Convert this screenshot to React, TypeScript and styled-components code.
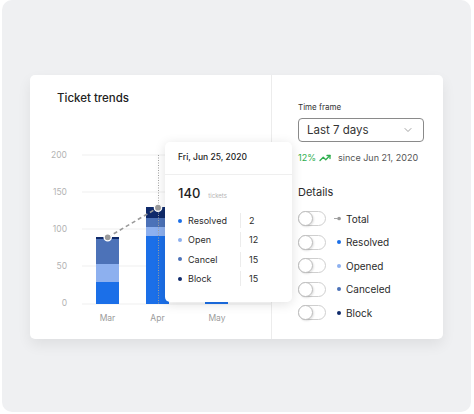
import React from "react";
import styled, { createGlobalStyle } from "styled-components";
import { ChevronDown, TrendingUp } from "lucide-react";

const GlobalStyle = createGlobalStyle`
  html, body {
    margin: 0;
    padding: 0;
    background: #ffffff;
    font-family: Inter, "Noto Sans", sans-serif;
    color: #2b2b2b;
  }
`;

const COLORS = {
  resolved: "#1b6fe8",
  opened: "#8db0ef",
  canceled: "#4c72b8",
  block: "#0f2a6b",
  total: "#9a9a9a",
};

const Page = styled.div`
  margin: 0 3px 0 2px;
  height: 412px;
  background: #eff0f2;
  border-radius: 10px;
  padding: 75px 0 0 28px;
  box-sizing: border-box;
`;

const Card = styled.div`
  position: relative;
  width: 413px;
  height: 264px;
  background: #ffffff;
  border-radius: 5px;
  box-shadow: 0 6px 14px rgba(0, 0, 0, 0.07);
  display: grid;
  grid-template-columns: 242px 1fr;
`;

const LeftPane = styled.section`
  display: flex;
  flex-direction: column;
  border-right: 1px solid #ececec;
`;

const Title = styled.h2`
  margin: 0;
  padding: 15px 27px 0;
  font-size: 11.5px;
  line-height: 16px;
  font-weight: 500;
  color: #222;
`;

const Chart = styled.svg`
  display: block;
  margin-top: 34px;
`;

const Tooltip = styled.div`
  position: absolute;
  left: 135px;
  top: 67px;
  width: 127px;
  height: 160px;
  background: #ffffff;
  border-radius: 5px;
  box-shadow: 0 2px 12px rgba(0, 0, 0, 0.12);
  z-index: 2;
`;

const TipHeader = styled.div`
  height: 33px;
  box-sizing: border-box;
  padding: 9px 13px 0;
  font-size: 8.5px;
  line-height: 12px;
  font-weight: 500;
  color: #222;
  border-bottom: 1px solid #efefef;
`;

const TipTotal = styled.div`
  margin-top: 9px;
  padding: 0 13px;
  line-height: 18px;
  font-size: 13px;
  font-weight: 500;
  color: #1e1e1e;
  display: flex;
  align-items: baseline;
  gap: 8px;
`;

const TipUnit = styled.span`
  font-size: 6px;
  font-weight: 400;
  color: #b5b5b5;
`;

const TipRows = styled.div`
  margin-top: 6px;
  display: flex;
  flex-direction: column;
`;

const TipRow = styled.div`
  display: grid;
  grid-template-columns: 62px 1fr;
  height: 19.3px;
  align-items: center;
  padding-left: 13px;
  font-size: 9px;
  color: #2b2b2b;
`;

const TipLabel = styled.span`
  display: flex;
  align-items: center;
  gap: 6px;
`;

const TipValue = styled.span`
  border-left: 1px solid #ececec;
  padding-left: 8px;
  line-height: 15px;
`;

const Dot = styled.span<{ color: string }>`
  width: 4px;
  height: 4px;
  border-radius: 50%;
  background: ${(p) => p.color};
  flex: none;
`;

const RightPane = styled.section`
  padding: 27px 0 0 26px;
  display: flex;
  flex-direction: column;
`;

const FieldLabel = styled.div`
  font-size: 8px;
  line-height: 10px;
  color: #333;
`;

const Select = styled.div`
  margin-top: 6px;
  width: 126px;
  height: 24px;
  box-sizing: border-box;
  border: 1px solid #8a8a8a;
  border-radius: 4px;
  padding: 0 9px 0 8px;
  display: flex;
  align-items: center;
  justify-content: space-between;
  font-size: 11.5px;
  color: #333;
`;

const Trend = styled.div`
  margin-top: 10px;
  display: flex;
  align-items: center;
  line-height: 12px;
  font-size: 9px;
  color: #555;
`;

const TrendValue = styled.span`
  color: #2eae4e;
  display: flex;
  align-items: center;
  gap: 3px;
  margin-right: 7px;
`;

const SectionTitle = styled.div`
  margin-top: 21px;
  font-size: 11px;
  line-height: 14px;
  color: #2b2b2b;
`;

const Legend = styled.div`
  margin-top: 8px;
  display: flex;
  flex-direction: column;
`;

const LegendRow = styled.div`
  height: 23.5px;
  display: flex;
  align-items: center;
  font-size: 10px;
  color: #2b2b2b;
`;

const Switch = styled.span`
  position: relative;
  width: 28px;
  height: 15px;
  box-sizing: border-box;
  border: 1px solid #cfcfcf;
  border-radius: 8px;
  background: #fff;
  margin-right: 8px;

  &::after {
    content: "";
    position: absolute;
    left: -1px;
    top: -1px;
    width: 15px;
    height: 15px;
    box-sizing: border-box;
    border-radius: 50%;
    border: 1px solid #bdbdbd;
    background: #fff;
    box-shadow: 1px 1px 2px rgba(0, 0, 0, 0.12);
  }
`;

const Marker = styled.span`
  width: 7px;
  display: flex;
  justify-content: flex-end;
  margin-right: 5px;
`;

function TotalMarker() {
  return (
    <svg width="8" height="5" viewBox="0 0 8 5">
      <line x1="0" y1="2.5" x2="4" y2="2.5" stroke={COLORS.total} strokeWidth="1" />
      <circle cx="5.8" cy="2.5" r="2.1" fill={COLORS.total} />
    </svg>
  );
}

const gridY = [155, 192, 229, 266];
const yLabels = [
  { v: "200", y: 155 },
  { v: "150", y: 192 },
  { v: "100", y: 229 },
  { v: "50", y: 266 },
  { v: "0", y: 303 },
];

type Segment = { color: string; from: number; to: number };
const bars: { x: number; segs: Segment[] }[] = [
  {
    x: 96,
    segs: [
      { color: COLORS.block, from: 237, to: 239 },
      { color: COLORS.canceled, from: 239, to: 264 },
      { color: COLORS.opened, from: 264, to: 282 },
      { color: COLORS.resolved, from: 282, to: 304 },
    ],
  },
  {
    x: 146,
    segs: [
      { color: COLORS.block, from: 207, to: 218 },
      { color: COLORS.canceled, from: 218, to: 227 },
      { color: COLORS.opened, from: 227, to: 236 },
      { color: COLORS.resolved, from: 236, to: 304 },
    ],
  },
  {
    x: 205,
    segs: [{ color: COLORS.resolved, from: 302, to: 304 }],
  },
];

const months = [
  { m: "Mar", x: 107.5 },
  { m: "Apr", x: 157.5 },
  { m: "May", x: 217 },
];

function TrendChart() {
  return (
    <Chart width="242" height="198" viewBox="30 140 242 198">
      {gridY.map((y) => (
        <line key={y} x1="82" x2="272" y1={y} y2={y} stroke="#efefef" strokeWidth="1" />
      ))}
      <line x1="82" x2="272" y1="304" y2="304" stroke="#efefef" strokeWidth="1" />
      {yLabels.map((l) => (
        <text
          key={l.v}
          x="67"
          y={l.y + 3}
          textAnchor="end"
          fontSize="8.5"
          fill="#b3b3b3"
          fontFamily="Inter, sans-serif"
        >
          {l.v}
        </text>
      ))}
      {bars.map((b) =>
        b.segs.map((s) => (
          <rect
            key={`${b.x}-${s.from}`}
            x={b.x}
            y={s.from}
            width="23"
            height={s.to - s.from}
            fill={s.color}
          />
        ))
      )}
      <line
        x1="158.5"
        x2="158.5"
        y1="155"
        y2="304"
        stroke="#a0a0a0"
        strokeWidth="1"
        strokeDasharray="1 1.5"
      />
      <line
        x1="107.7"
        y1="237.3"
        x2="158"
        y2="207.7"
        stroke="#9a9a9a"
        strokeWidth="1.6"
        strokeDasharray="4 3"
      />
      <circle cx="107.7" cy="237.3" r="3.6" fill="#9a9a9a" stroke="#fff" strokeWidth="1.4" />
      <circle cx="158" cy="207.7" r="3.6" fill="#9a9a9a" stroke="#fff" strokeWidth="1.4" />
      {months.map((m) => (
        <text
          key={m.m}
          x={m.x}
          y="321"
          textAnchor="middle"
          fontSize="8.5"
          fill="#9b9b9b"
          fontFamily="Inter, sans-serif"
        >
          {m.m}
        </text>
      ))}
    </Chart>
  );
}

const tipRows = [
  { label: "Resolved", value: 2, color: COLORS.resolved },
  { label: "Open", value: 12, color: COLORS.opened },
  { label: "Cancel", value: 15, color: COLORS.canceled },
  { label: "Block", value: 15, color: COLORS.block },
];

const legend = [
  { label: "Total", color: COLORS.total },
  { label: "Resolved", color: COLORS.resolved },
  { label: "Opened", color: COLORS.opened },
  { label: "Canceled", color: COLORS.canceled },
  { label: "Block", color: COLORS.block },
];

export default function App() {
  return (
    <>
      <GlobalStyle />
      <Page>
        <Card>
          <LeftPane>
            <Title>Ticket trends</Title>
            <TrendChart />
          </LeftPane>

          <Tooltip>
            <TipHeader>Fri, Jun 25, 2020</TipHeader>
            <TipTotal>
              140 <TipUnit>tickets</TipUnit>
            </TipTotal>
            <TipRows>
              {tipRows.map((r) => (
                <TipRow key={r.label}>
                  <TipLabel>
                    <Dot color={r.color} />
                    {r.label}
                  </TipLabel>
                  <TipValue>{r.value}</TipValue>
                </TipRow>
              ))}
            </TipRows>
          </Tooltip>

          <RightPane>
            <FieldLabel>Time frame</FieldLabel>
            <Select>
              Last 7 days
              <ChevronDown size={12} color="#8a8a8a" strokeWidth={1.6} />
            </Select>
            <Trend>
              <TrendValue>
                12%
                <TrendingUp size={12} strokeWidth={2.6} color="#2eae4e" />
              </TrendValue>
              since Jun 21, 2020
            </Trend>
            <SectionTitle>Details</SectionTitle>
            <Legend>
              {legend.map((l) => (
                <LegendRow key={l.label}>
                  <Switch />
                  <Marker>
                    {l.label === "Total" ? <TotalMarker /> : <Dot color={l.color} />}
                  </Marker>
                  {l.label}
                </LegendRow>
              ))}
            </Legend>
          </RightPane>
        </Card>
      </Page>
    </>
  );
}
